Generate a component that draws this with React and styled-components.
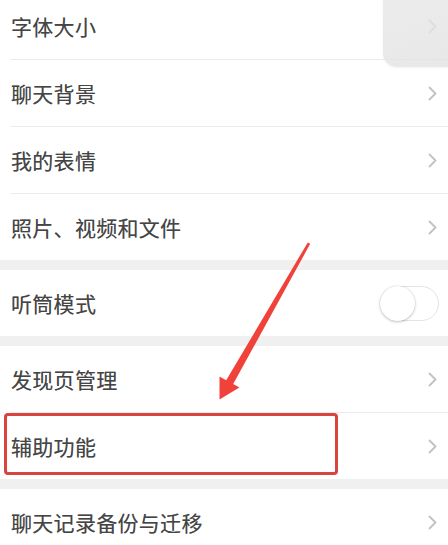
import React from 'react';
import styled, { createGlobalStyle } from 'styled-components';

const GlobalStyle = createGlobalStyle`
  html, body {
    margin: 0;
    padding: 0;
    background: #f0f0f0;
    overflow: hidden;
  }
  body {
    font-family: "Noto Sans CJK SC", "Noto Sans", sans-serif;
  }
`;

const Page = styled.div`
  position: relative;
  width: 448px;
  height: 545px;
  overflow: hidden;
  background: #f0f0f0;
`;

const Scroller = styled.div`
  margin-top: -7px;
  display: flex;
  flex-direction: column;
  gap: 10px;
`;

const Group = styled.div`
  background: #ffffff;
  display: flex;
  flex-direction: column;
`;

const Row = styled.div`
  padding-left: 10px;
  background: #ffffff;
`;

const RowInner = styled.div`
  height: 66px;
  display: flex;
  align-items: center;
  justify-content: space-between;
  padding-right: ${p => (p.$toggle ? '9px' : '11px')};
  padding-left: 1px;
  border-bottom: ${p => (p.$last ? 'none' : '1px solid #ececec')};
`;

const Label = styled.span`
  font-size: 21px;
  color: #454545;
  letter-spacing: 0.3px;
  text-shadow: 0 0 0.6px rgba(60, 60, 60, 0.5);
`;

const Toggle = styled.div`
  width: 59px;
  height: 35px;
  border-radius: 18px;
  border: 1.5px solid #e4e4e4;
  background: #ffffff;
  display: flex;
  align-items: center;
  box-sizing: border-box;
`;

const Knob = styled.div`
  width: 35px;
  height: 35px;
  border-radius: 50%;
  background: #ffffff;
  margin-left: -1.5px;
  box-shadow: 0 1px 3px rgba(0, 0, 0, 0.22), 0 0 0 0.5px rgba(0, 0, 0, 0.08);
`;

const TouchPad = styled.div`
  position: absolute;
  top: -14px;
  left: 383px;
  width: 80px;
  height: 81px;
  border-radius: 14px;
  background: linear-gradient(160deg, rgba(232, 232, 232, 0.82), rgba(225, 225, 225, 0.78));
  box-shadow: 0 1px 3px rgba(0, 0, 0, 0.05);
`;

const Highlight = styled.div`
  position: absolute;
  left: 4px;
  top: 413px;
  width: 334px;
  height: 62px;
  border: 3px solid #d9443f;
  border-radius: 4px;
  box-sizing: border-box;
`;

const ArrowSvg = styled.svg`
  position: absolute;
  left: 0;
  top: 0;
  pointer-events: none;
`;

const Chevron = () => (
  <svg width="9" height="15" viewBox="0 0 9 15">
    <path d="M1.5 1.5 L7.5 7.5 L1.5 13.5" fill="none" stroke="#c2c2c2" strokeWidth="1.8" strokeLinecap="round" strokeLinejoin="round" />
  </svg>
);

const groups = [
  ['字体大小', '聊天背景', '我的表情', '照片、视频和文件'],
  ['听筒模式'],
  ['发现页管理', '辅助功能'],
  ['聊天记录备份与迁移'],
];

export default function App() {
  return (
    <Page>
      <GlobalStyle />
      <Scroller>
        {groups.map((items, gi) => (
          <Group key={gi}>
            {items.map((label, i) => {
              const toggle = label === '听筒模式';
              return (
                <Row key={label}>
                  <RowInner $last={i === items.length - 1} $toggle={toggle}>
                    <Label>{label}</Label>
                    {toggle ? (
                      <Toggle>
                        <Knob />
                      </Toggle>
                    ) : (
                      <Chevron />
                    )}
                  </RowInner>
                </Row>
              );
            })}
          </Group>
        ))}
      </Scroller>
      <TouchPad />
      <Highlight />
      <ArrowSvg width="448" height="545" viewBox="0 0 448 545">
        <polygon
          points="310.2,243.8 307.8,242.4 226.2,380.3 219.5,376.5 219.5,399.5 239.4,387.5 233.2,384"
          fill="#f0423b"
        />
      </ArrowSvg>
    </Page>
  );
}
